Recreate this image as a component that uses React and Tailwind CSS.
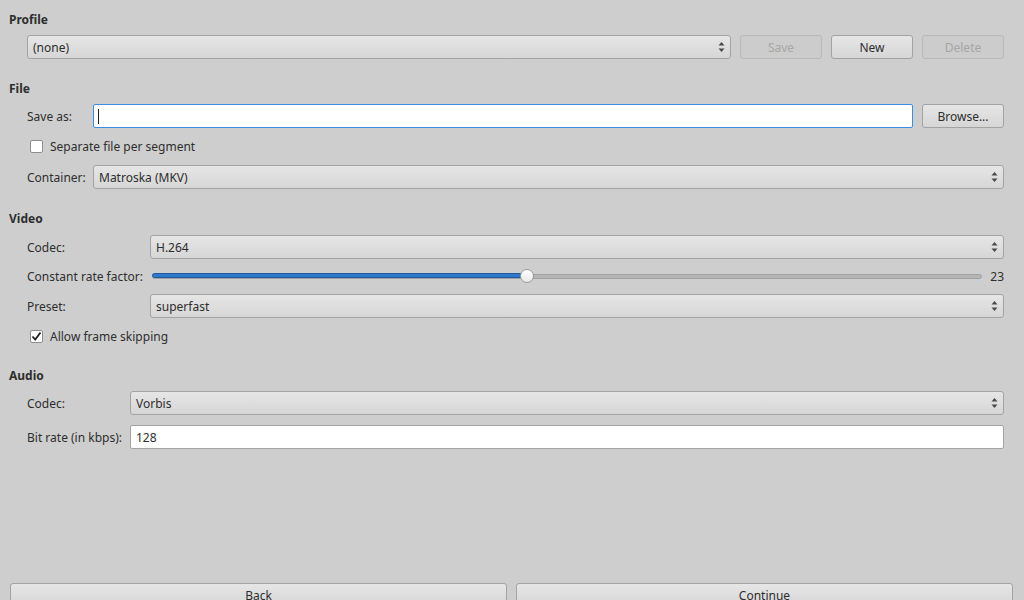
import React from "react";

const font = { fontFamily: '"Noto Sans", "Open Sans", sans-serif' };

function Arrows() {
  return (
    <svg width="7" height="12" viewBox="0 0 7 12" className="shrink-0 -mt-[2px]">
      <path d="M3.5 1 L6.5 4.5 L0.5 4.5 Z" fill="#4a4a4a" />
      <path d="M3.5 11 L6.5 7.5 L0.5 7.5 Z" fill="#4a4a4a" />
    </svg>
  );
}

function Combo({ value, className = "" }) {
  return (
    <div
      className={`h-[24px] pt-[2px] flex items-center justify-between pl-[5px] pr-[5px] rounded-[3px] border border-[#a3a3a3] bg-gradient-to-b from-[#e6e6e6] to-[#d6d6d6] text-[#2e2e2e] ${className}`}
    >
      <span>{value}</span>
      <Arrows />
    </div>
  );
}

function Button({ children, disabled, className = "" }) {
  return (
    <div
      className={`h-[24px] pt-[2px] flex items-center justify-center rounded-[3px] border ${
        disabled
          ? "border-[#b9b9b9] bg-[#cccccc] text-[#a6a6a6]"
          : "border-[#a3a3a3] bg-gradient-to-b from-[#e6e6e6] to-[#d6d6d6] text-[#2e2e2e]"
      } ${className}`}
    >
      {children}
    </div>
  );
}

function Check({ checked }) {
  return (
    <div className="w-[13px] h-[13px] rounded-[2px] border border-[#8e8e8e] bg-white flex items-center justify-center shrink-0">
      {checked && (
        <svg width="11" height="11" viewBox="0 0 11 11">
          <path d="M1.5 5.5 L4.2 8.5 L9.5 1.5" stroke="#222" strokeWidth="1.8" fill="none" />
        </svg>
      )}
    </div>
  );
}

function Header({ children, className = "" }) {
  return <div className={`h-[16px] leading-[18px] font-bold text-[#2e2e2e] pl-[9px] ${className}`}>{children}</div>;
}

export default function App() {
  return (
    <div
      style={font}
      className="w-[1024px] h-[600px] overflow-hidden bg-[#cecece] text-[12px] text-[#2e2e2e] flex flex-col"
    >
      <Header className="mt-[11px]">Profile</Header>
      <div className="mt-[8px] flex pl-[27px] pr-[20px] gap-[9px]">
        <Combo value="(none)" className="flex-1" />
        <Button disabled className="w-[82px]">Save</Button>
        <Button className="w-[82px]">New</Button>
        <Button disabled className="w-[82px]">Delete</Button>
      </div>

      <Header className="mt-[21px]">File</Header>
      <div className="mt-[8px] flex items-center pl-[27px] pr-[20px]">
        <div className="w-[66px] pt-[2px]">Save as:</div>
        <div className="flex-1 h-[24px] bg-white border border-[#3d8ee0] rounded-[2px] flex items-center pl-[4px]">
          <div className="w-[1px] h-[15px] bg-[#222]" />
        </div>
        <Button className="w-[82px] ml-[9px]">Browse...</Button>
      </div>
      <div className="mt-[6px] h-[24px] flex items-center pl-[30px] gap-[7px]">
        <Check />
        <span className="pt-[2px]">Separate file per segment</span>
      </div>
      <div className="mt-[7px] flex items-center pl-[27px] pr-[20px]">
        <div className="w-[66px] pt-[2px]">Container:</div>
        <Combo value="Matroska (MKV)" className="flex-1" />
      </div>

      <Header className="mt-[21px]">Video</Header>
      <div className="mt-[9px] flex items-center pl-[27px] pr-[20px]">
        <div className="w-[123px] pt-[2px]">Codec:</div>
        <Combo value="H.264" className="flex-1" />
      </div>
      <div className="mt-[5px] h-[24px] flex items-center pl-[27px] pr-[20px]">
        <div className="w-[125px] pt-[2px]">Constant rate factor:</div>
        <div className="flex-1 relative h-[14px] flex items-center">
          <div className="w-full h-[5px] rounded-full bg-[#b5b5b5] border border-[#a2a2a2]" />
          <div className="absolute left-0 top-[4px] h-[5px] w-[375px] rounded-full bg-[#2f79cc] border border-[#23579a]" />
          <div className="absolute left-[368px] top-0 w-[14px] h-[14px] rounded-full bg-gradient-to-b from-white to-[#e8e8e8] border border-[#9a9a9a]" />
        </div>
        <div className="w-[22px] text-right pt-[2px]">23</div>
      </div>
      <div className="mt-[6px] flex items-center pl-[27px] pr-[20px]">
        <div className="w-[123px] pt-[2px]">Preset:</div>
        <Combo value="superfast" className="flex-1" />
      </div>
      <div className="mt-[6px] h-[24px] flex items-center pl-[30px] gap-[7px]">
        <Check checked />
        <span className="pt-[2px]">Allow frame skipping</span>
      </div>

      <Header className="mt-[19px]">Audio</Header>
      <div className="mt-[8px] flex items-center pl-[27px] pr-[20px]">
        <div className="w-[103px] pt-[2px]">Codec:</div>
        <Combo value="Vorbis" className="flex-1" />
      </div>
      <div className="mt-[10px] flex items-center pl-[27px] pr-[20px]">
        <div className="w-[103px] pt-[2px]">Bit rate (in kbps):</div>
        <div className="flex-1 h-[24px] pt-[2px] bg-white border border-[#a3a3a3] rounded-[2px] flex items-center pl-[5px]">
          128
        </div>
      </div>

      <div className="flex-1" />
      <div className="flex gap-[9px] pl-[10px] pr-[11px] mb-[-7px]">
        <Button className="flex-1">Back</Button>
        <Button className="flex-1">Continue</Button>
      </div>
    </div>
  );
}
